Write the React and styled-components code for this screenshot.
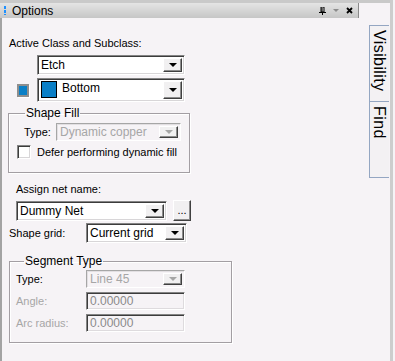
import React from "react"
import styled, { createGlobalStyle } from "styled-components"

const GlobalStyle = createGlobalStyle`
  html, body {
    margin: 0;
    padding: 0;
    background: #f6f3f6;
  }
  body {
    font-family: "Liberation Sans", Arial, sans-serif;
    font-size: 11px;
    color: #000;
  }
`

const Frame = styled.div`
  width: 395px;
  height: 361px;
  display: flex;
  flex-direction: column;
  background: #f6f3f6;
  overflow: hidden;
`

const TopStrip = styled.div`
  height: 3px;
  width: 391px;
  background: #c9c9c9;
`

const Body = styled.div`
  flex: 1;
  display: flex;
`

const Panel = styled.div`
  width: 357px;
  display: flex;
  flex-direction: column;
  border-left: 2px solid #a3a3a3;
`

const TitleBar = styled.div`
  height: 15px;
  display: flex;
  align-items: center;
  background: linear-gradient(#e4e4e4, #c6c6c6);
  border-right: 1px solid #8a8a8a;
  margin-left: -2px;
  padding-left: 2px;
  font-size: 12px;
`

const Grip = styled.div`
  width: 2px;
  height: 9px;
  margin: 0 6px 0 2px;
  background: repeating-linear-gradient(#1e90ff 0 3px, transparent 3px 4px);
`

const Title = styled.span`
  flex: 1;
`

const TitleIcons = styled.div`
  display: flex;
  align-items: center;
  gap: 7px;
  padding-right: 5px;
`

const Content = styled.div`
  display: flex;
  flex-direction: column;
  padding-left: 6px;
`

const Label = styled.div`
  line-height: 14px;
  margin-left: ${(p) => p.$indent || 0}px;
  margin-top: ${(p) => p.$top || 0}px;
  color: ${(p) => (p.$disabled ? "#a6a6a6" : "#000")};
  white-space: nowrap;
`

const Row = styled.div`
  display: flex;
  align-items: center;
  margin-left: ${(p) => p.$indent || 0}px;
  margin-top: ${(p) => p.$top || 0}px;
  gap: ${(p) => p.$gap || 0}px;
`

const FieldRow = styled.div`
  display: grid;
  grid-template-columns: ${(p) => p.$label}px ${(p) => p.$field}px;
  align-items: center;
  margin-top: ${(p) => p.$top || 0}px;
`

const ComboBox = styled.div`
  box-sizing: border-box;
  width: ${(p) => p.$width}px;
  height: ${(p) => p.$height || 20}px;
  display: flex;
  align-items: ${(p) => (p.$tall ? "stretch" : "center")};
  padding: 2px;
  background: ${(p) => (p.$disabled ? "#f6f3f6" : "#fff")};
  border: 1px solid;
  border-color: ${(p) =>
    p.$disabled ? "#a6a6a6 #fff #fff #a6a6a6" : "#848484 #fff #fff #848484"};
  box-shadow: ${(p) =>
    p.$disabled
      ? "inset 1px 1px #e2dfe2"
      : "inset 1px 1px #3c3c3c, inset -1px -1px #d8d6d8"};
`

const ComboText = styled.div`
  flex: 1;
  display: flex;
  align-items: ${(p) => (p.$top ? "flex-start" : "center")};
  gap: 5px;
  padding-left: 1px;
  font-size: 12px;
  color: ${(p) => (p.$disabled ? "#a6a6a6" : "#000")};
  white-space: nowrap;
`

const DropButton = styled.div`
  box-sizing: border-box;
  width: 19px;
  align-self: stretch;
  display: flex;
  align-items: center;
  justify-content: center;
  background: #f1f0f1;
  border: 1px solid;
  border-color: #fff #404040 #404040 #fff;
  box-shadow: inset -1px -1px #8c8c8c;
`

const Arrow = styled.div`
  width: 0;
  height: 0;
  border-left: 4px solid transparent;
  border-right: 4px solid transparent;
  border-top: 4px solid ${(p) => (p.$disabled ? "#a6a6a6" : "#000")};
`

const Swatch = styled.div`
  box-sizing: border-box;
  width: ${(p) => p.$size}px;
  height: ${(p) => p.$size + 1}px;
  background: #0a7fc6;
  border: 1px solid #000;
`

const ColorCheck = styled.div`
  box-sizing: border-box;
  width: 12px;
  height: 13px;
  background: #0a7fc6;
  border: 2px solid #8e8e8e;
  box-shadow: 1px 1px #fff;
`

const CheckBox = styled.div`
  box-sizing: border-box;
  width: 14px;
  height: 14px;
  background: #fff;
  border: 1px solid;
  border-color: #848484 #fff #fff #848484;
  box-shadow: inset 1px 1px #3c3c3c, inset -1px -1px #d8d6d8;
`

const Group = styled.fieldset`
  box-sizing: border-box;
  width: ${(p) => p.$width}px;
  margin: ${(p) => p.$top}px 0 0 ${(p) => p.$indent || 0}px;
  padding: ${(p) => p.$padTop}px 0 ${(p) => p.$padBottom}px ${(p) => p.$padLeft}px;
  border: 1px solid #a39ea3;
  box-shadow: 1px 1px #fff, inset 1px 1px #fff;
  min-width: 0;
`

const Legend = styled.legend`
  padding: 0 1px;
  margin-left: 8px;
  line-height: 14px;
  font-size: 12px;
`

const TextBox = styled.div`
  box-sizing: border-box;
  width: ${(p) => p.$width}px;
  height: 18px;
  display: flex;
  align-items: center;
  padding-left: 3px;
  font-size: 12px;
  color: #8a8a8a;
  border: 1px solid;
  border-color: #848484 #fff #fff #848484;
  box-shadow: inset 1px 1px #3c3c3c, inset -1px -1px #dedbde;
`

const SmallButton = styled.div`
  box-sizing: border-box;
  width: 18px;
  height: 21px;
  display: flex;
  align-items: flex-end;
  justify-content: center;
  padding-bottom: 4px;
  font-size: 11px;
  background: #f1f0f1;
  border: 1px solid;
  border-color: #fff #404040 #404040 #fff;
  box-shadow: inset -1px -1px #8c8c8c;
`

const Side = styled.div`
  width: 34px;
  display: flex;
  flex-direction: column;
  padding: 25px 0 0 10px;
  border-right: 3px solid #cdcdcd;
  box-sizing: border-box;
  margin-top: -3px;
  height: calc(100% + 3px);
`

const SideTab = styled.div`
  box-sizing: border-box;
  width: 20px;
  height: ${(p) => p.$height}px;
  writing-mode: vertical-rl;
  font-size: 16px;
  letter-spacing: 0.4px;
  padding-top: 4px;
  line-height: 19px;
  border: 1px solid #94a6c2;
  border-right: none;
  border-top: ${(p) => (p.$first ? "1px solid #94a6c2" : "none")};
  background: #f3f1f3;
`

const Combo = ({ width, height, text, disabled, tall, children }) => (
  <ComboBox $width={width} $height={height} $disabled={disabled} $tall={tall}>
    <ComboText $disabled={disabled} $top={tall}>
      {children}
      {text}
    </ComboText>
    <DropButton>
      <Arrow $disabled={disabled} />
    </DropButton>
  </ComboBox>
)

const App = () => {
  return (
    <>
      <GlobalStyle />
      <Frame>
        <TopStrip />
        <Body>
          <Panel>
            <TitleBar>
              <Grip />
              <Title>Options</Title>
              <TitleIcons>
                <svg width="7" height="8" viewBox="0 0 7 8">
                  <path d="M2 0h3v5H2z M3 1v4" fill="none" stroke="#000" />
                  <path d="M0 5.5h7 M3.5 5v3" stroke="#000" />
                </svg>
                <svg width="6" height="4" viewBox="0 0 6 4">
                  <path d="M0 0h6L3 3z" fill="#8c8c8c" />
                </svg>
                <svg width="7" height="7" viewBox="0 0 7 7">
                  <path d="M1 1l5 5M6 1L1 6" stroke="#000" strokeWidth="1.8" />
                </svg>
              </TitleIcons>
            </TitleBar>
            <Content>
              <Label $indent={1} $top={18}>Active Class and Subclass:</Label>
              <Row $indent={29} $top={5}>
                <Combo width={148} height={20} text="Etch" />
              </Row>
              <Row $indent={9} $top={3} $gap={8}>
                <ColorCheck />
                <Combo width={148} height={24} text="Bottom" tall>
                  <Swatch $size={16} />
                </Combo>
              </Row>
              <Group $width={182} $top={4} $padTop={3} $padBottom={13} $padLeft={8}>
                <Legend>Shape Fill</Legend>
                <FieldRow $label={39} $field={127}>
                  <Label $indent={7}>Type:</Label>
                  <Combo width={125} height={18} text="Dynamic copper" disabled />
                </FieldRow>
                <Row $top={4} $gap={6}>
                  <CheckBox />
                  <Label>Defer performing dynamic fill</Label>
                </Row>
              </Group>
              <Label $indent={8} $top={9}>Assign net name:</Label>
              <Row $indent={8} $top={4} $gap={6}>
                <Combo width={151} height={20} text="Dummy Net" />
                <SmallButton>...</SmallButton>
              </Row>
              <FieldRow $label={78} $field={101} $top={2}>
                <Label $indent={1}>Shape grid:</Label>
                <Combo width={101} height={20} text="Current grid" />
              </FieldRow>
              <Group $width={223} $indent={1} $top={11} $padTop={2} $padBottom={10} $padLeft={6}>
                <Legend>Segment Type</Legend>
                <FieldRow $label={70} $field={99}>
                  <Label>Type:</Label>
                  <Combo width={99} height={18} text="Line 45" disabled />
                </FieldRow>
                <FieldRow $label={70} $field={99} $top={4}>
                  <Label $disabled>Angle:</Label>
                  <TextBox $width={99}>0.00000</TextBox>
                </FieldRow>
                <FieldRow $label={70} $field={99} $top={4}>
                  <Label $disabled>Arc radius:</Label>
                  <TextBox $width={99}>0.00000</TextBox>
                </FieldRow>
              </Group>
            </Content>
          </Panel>
          <Side>
            <SideTab $first $height={77}>Visibility</SideTab>
            <SideTab $height={76}>Find</SideTab>
          </Side>
        </Body>
      </Frame>
    </>
  )
}

export default App
